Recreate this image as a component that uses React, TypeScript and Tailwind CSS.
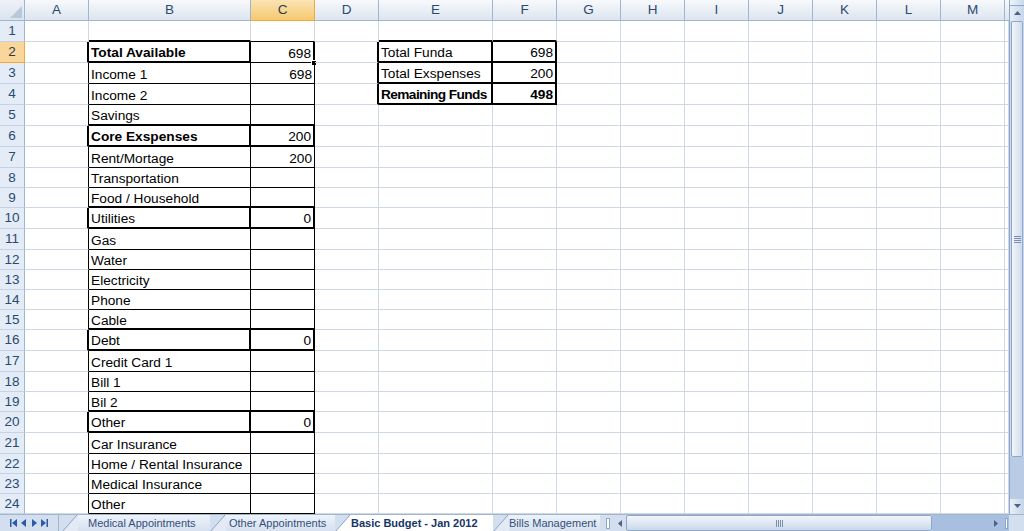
import React from 'react';

const COLS = ['A', 'B', 'C', 'D', 'E', 'F', 'G', 'H', 'I', 'J', 'K', 'L', 'M', 'N'];
const ROW_H = [21, 21, 21, 21, 21, 21, 21, 20, 20, 21, 21, 20, 20, 20, 20, 21, 21, 20, 20, 21, 21, 20, 20, 20];

type Cell = { text: string; bold?: boolean; num?: boolean; tight?: boolean };

const data: Record<string, Cell> = {
  B2: { text: 'Total Available', bold: true },
  C2: { text: '698', num: true },
  B3: { text: 'Income 1' },
  C3: { text: '698', num: true },
  B4: { text: 'Income 2' },
  B5: { text: 'Savings' },
  B6: { text: 'Core Exspenses', bold: true },
  C6: { text: '200', num: true },
  B7: { text: 'Rent/Mortage' },
  C7: { text: '200', num: true },
  B8: { text: 'Transportation' },
  B9: { text: 'Food / Household' },
  B10: { text: 'Utilities' },
  C10: { text: '0', num: true },
  B11: { text: 'Gas' },
  B12: { text: 'Water' },
  B13: { text: 'Electricity' },
  B14: { text: 'Phone' },
  B15: { text: 'Cable' },
  B16: { text: 'Debt' },
  C16: { text: '0', num: true },
  B17: { text: 'Credit Card 1' },
  B18: { text: 'Bill 1' },
  B19: { text: 'Bil 2' },
  B20: { text: 'Other' },
  C20: { text: '0', num: true },
  B21: { text: 'Car Insurance' },
  B22: { text: 'Home / Rental Insurance' },
  B23: { text: 'Medical Insurance' },
  B24: { text: 'Other' },
  E2: { text: 'Total Funda' },
  F2: { text: '698', num: true },
  E3: { text: 'Total Exspenses' },
  F3: { text: '200', num: true },
  E4: { text: 'Remaining Funds', bold: true, tight: true },
  F4: { text: '498', num: true, bold: true },
};

// 0 = gridline, 1 = thin black, 2 = medium black
function box(r: number, c: number): number {
  const col = COLS[c];
  if ((col === 'B' || col === 'C') && r >= 2 && r <= 24) {
    if ([6, 10, 16, 20].includes(r)) return 2;
    if (r === 2 && col === 'B') return 2;
    return 1;
  }
  if ((col === 'E' || col === 'F') && r >= 2 && r <= 4) return 2;
  return 0;
}

const RIGHT = ['border-r border-r-[#d0d7e5]', 'border-r border-r-black', 'border-r-2 border-r-black'];
const BOTTOM = ['border-b border-b-[#d0d7e5]', 'border-b border-b-black', 'border-b-2 border-b-black'];

function Arrow({ dir }: { dir: 'up' | 'down' | 'left' | 'right' }) {
  const pts = {
    up: '1,6 4.5,2 8,6',
    down: '1,2 4.5,6 8,2',
    left: '6,1 2,4.5 6,8',
    right: '2,1 6,4.5 2,8',
  }[dir];
  return (
    <svg width="9" height="9" viewBox="0 0 9 9">
      <polygon points={pts} fill="#4d6185" />
    </svg>
  );
}

function Tab({ label, active, textW, pl, pr }: { label: string; active?: boolean; textW: string; pl: string; pr: string }) {
  return (
    <div className="flex h-full items-stretch">
      <svg width="16" height="17" viewBox="0 0 16 17" className="shrink-0">
        <polygon points="0,17 15,0 16,0 16,17" fill={active ? '#ffffff' : '#e3eaf5'} />
        <line x1="0" y1="17" x2="15" y2="0" stroke="#8ba3c7" strokeWidth="1" />
      </svg>
      <div
        className={`flex items-center whitespace-nowrap ${pl} ${pr} ${
          active
            ? 'bg-white font-bold text-[#15356a]'
            : 'bg-gradient-to-b from-[#eef3fa] to-[#d6e0ef] text-[#33507a]'
        }`}
      >
        <span className={`block ${textW}`}>{label}</span>
      </div>
    </div>
  );
}

export default function App() {
  const headerCell =
    'flex items-center justify-center pt-[1px] border-r border-b border-r-[#9eb6ce] border-b-[#9eb6ce] bg-gradient-to-b from-[#f7f9fc] to-[#dde5ef] text-[13.5px] text-[#2b4a70]';
  const selHeaderCell =
    'flex items-center justify-center pt-[1px] border-r border-b border-r-[#f2a83a] border-b-[#f2a83a] bg-gradient-to-b from-[#fbe3b3] to-[#f5c96f] text-[13.5px] text-[#2b3b50]';

  return (
    <div
      className="flex h-[531px] w-[1024px] flex-col overflow-hidden bg-white"
      style={{ fontFamily: '"Liberation Sans", Arial, sans-serif' }}
    >
      <div className="flex h-[514px]">
        {/* Sheet grid */}
        <div className="grid w-[1009px] grid-cols-[25px_64px_162px_64px_64px_114px_64px_64px_64px_64px_64px_64px_64px_64px_1fr] grid-rows-[21px_21px_21px_21px_21px_21px_21px_21px_20px_20px_21px_21px_20px_20px_20px_20px_21px_21px_20px_20px_21px_21px_20px_20px_20px]">
          {/* Corner */}
          <div className="relative border-r border-b border-r-[#9eb6ce] border-b-[#9eb6ce] bg-gradient-to-b from-[#eef2f8] to-[#dbe3ee]">
            <svg className="absolute right-[2px] bottom-[2px]" width="12" height="12" viewBox="0 0 12 12">
              <polygon points="12,0 12,12 0,12" fill="#b8c7da" />
            </svg>
          </div>
          {COLS.map((col) => (
            <div
              key={col}
              className={
                col === 'C'
                  ? selHeaderCell
                  : col === 'N'
                  ? 'border-b border-b-[#9eb6ce] bg-gradient-to-b from-[#f7f9fc] to-[#dde5ef]'
                  : headerCell
              }
            >
              {col === 'N' ? '' : col}
            </div>
          ))}

          {ROW_H.map((_, i) => {
            const r = i + 1;
            return (
              <React.Fragment key={r}>
                <div
                  className={
                    r === 2
                      ? 'flex items-center justify-center pt-[1px] border-r border-b border-r-[#f2a83a] border-b-[#f2a83a] bg-[#f9d699] text-[13.5px] text-[#2b3b50]'
                      : 'flex items-center justify-center pt-[1px] border-r border-b border-r-[#9eb6ce] border-b-[#c5d3e4] bg-[#e4ecf7] text-[13.5px] text-[#2b4a70]'
                  }
                >
                  {r}
                </div>
                {COLS.map((col, c) => {
                  const rb = Math.max(box(r, c), box(r, c + 1));
                  const bb = Math.max(box(r, c), box(r + 1, c));
                  const cell = data[`${col}${r}`];
                  const active = col === 'C' && r === 2;
                  const rightCls = active ? 'border-r-2 border-r-black' : RIGHT[rb];
                  return (
                    <div
                      key={col}
                      className={`relative flex items-center overflow-visible whitespace-nowrap pt-[2px] text-[13.7px] leading-[17px] text-black ${rightCls} ${BOTTOM[bb]} ${
                        cell?.num ? 'justify-end pr-[2px]' : 'pl-[2px]'
                      } ${cell?.bold ? 'font-bold' : ''} ${cell?.tight ? 'tracking-[-0.6px]' : ''}`}
                    >
                      {cell?.text}
                      {active && (
                        <span className="absolute right-[-4px] bottom-[-4px] h-[6px] w-[6px] border border-white bg-black" />
                      )}
                    </div>
                  );
                })}
              </React.Fragment>
            );
          })}
        </div>

        {/* Vertical scrollbar */}
        <div className="flex w-[15px] flex-col border-l border-l-[#8da6c9] bg-[#c9d8ec]">
          <div className="h-[6px] border-b border-b-[#8da6c9] bg-gradient-to-r from-[#eef3fa] to-[#cbd9ec]" />
          <div className="flex h-[15px] items-center justify-center bg-gradient-to-r from-[#e9eff8] to-[#c6d5ea]">
            <Arrow dir="up" />
          </div>
          <div className="mx-[1px] flex h-[436px] items-center justify-center rounded-[2px] border border-[#8ea8cc] bg-gradient-to-r from-[#f3f6fb] to-[#cfdbeb]">
            <div className="flex flex-col gap-[1px]">
              <span className="block h-[1px] w-[7px] bg-[#7b8fae]" />
              <span className="block h-[1px] w-[7px] bg-[#7b8fae]" />
              <span className="block h-[1px] w-[7px] bg-[#7b8fae]" />
              <span className="block h-[1px] w-[7px] bg-[#7b8fae]" />
            </div>
          </div>
          <div className="flex-1 bg-[#b9cce6]" />
          <div className="flex h-[15px] items-center justify-center bg-gradient-to-r from-[#e9eff8] to-[#c6d5ea]">
            <Arrow dir="down" />
          </div>
        </div>
      </div>

      {/* Sheet tabs + horizontal scrollbar */}
      <div className="flex h-[17px] border-t border-t-[#9eb6ce] bg-[#d3deee] text-[11px]">
        <div className="flex w-[58px] items-center justify-around px-[8px]">
          <svg width="8" height="8" viewBox="0 0 8 8"><rect x="0" y="0" width="1.5" height="8" fill="#2a5aa8" /><polygon points="7,0 2,4 7,8" fill="#2a5aa8" /></svg>
          <svg width="6" height="8" viewBox="0 0 6 8"><polygon points="5,0 0,4 5,8" fill="#2a5aa8" /></svg>
          <svg width="6" height="8" viewBox="0 0 6 8"><polygon points="1,0 6,4 1,8" fill="#2a5aa8" /></svg>
          <svg width="8" height="8" viewBox="0 0 8 8"><polygon points="1,0 6,4 1,8" fill="#2a5aa8" /><rect x="6.5" y="0" width="1.5" height="8" fill="#2a5aa8" /></svg>
        </div>
        <div className="w-[1px] bg-[#9eb6ce]" />
        <div className="flex w-[545px] items-stretch overflow-hidden pl-[3px]">
          <Tab label="Medical Appointments" textW="w-[104px]" pl="pl-[10px]" pr="pr-[18px]" />
          <Tab label="Other Appointments" textW="w-[96px]" pl="pl-[3px]" pr="pr-[10px]" />
          <Tab label="Basic Budget - Jan 2012" active textW="w-[134px]" pl="pl-0" pr="pr-[8px]" />
          <Tab label="Bills Management" textW="w-[83px]" pl="pl-0" pr="pr-[8px]" />
        </div>
        <div className="flex w-[8px] items-center justify-center">
          <span className="block h-[11px] w-[4px] border border-[#8da6c9] bg-white" />
        </div>
        <div className="ml-[2px] flex flex-1 items-stretch">
          <div className="flex w-[12px] items-center justify-center">
            <Arrow dir="left" />
          </div>
          <div className="flex w-[306px] items-center justify-center rounded-[2px] border border-[#8ea8cc] bg-gradient-to-b from-[#f3f6fb] to-[#cbd8ea]">
            <div className="flex gap-[1px]">
              <span className="block h-[7px] w-[1px] bg-[#7b8fae]" />
              <span className="block h-[7px] w-[1px] bg-[#7b8fae]" />
              <span className="block h-[7px] w-[1px] bg-[#7b8fae]" />
              <span className="block h-[7px] w-[1px] bg-[#7b8fae]" />
            </div>
          </div>
          <div className="flex-1 bg-[#a9bfdf]" />
          <div className="flex w-[14px] items-center justify-center bg-[#a9bfdf]">
            <Arrow dir="right" />
          </div>
          <div className="flex w-[6px] items-center justify-center bg-[#a9bfdf]">
            <span className="block h-[11px] w-[3px] border border-[#8da6c9] bg-white" />
          </div>
          <div className="w-[15px] bg-[#d3deee]" />
        </div>
      </div>
    </div>
  );
}
